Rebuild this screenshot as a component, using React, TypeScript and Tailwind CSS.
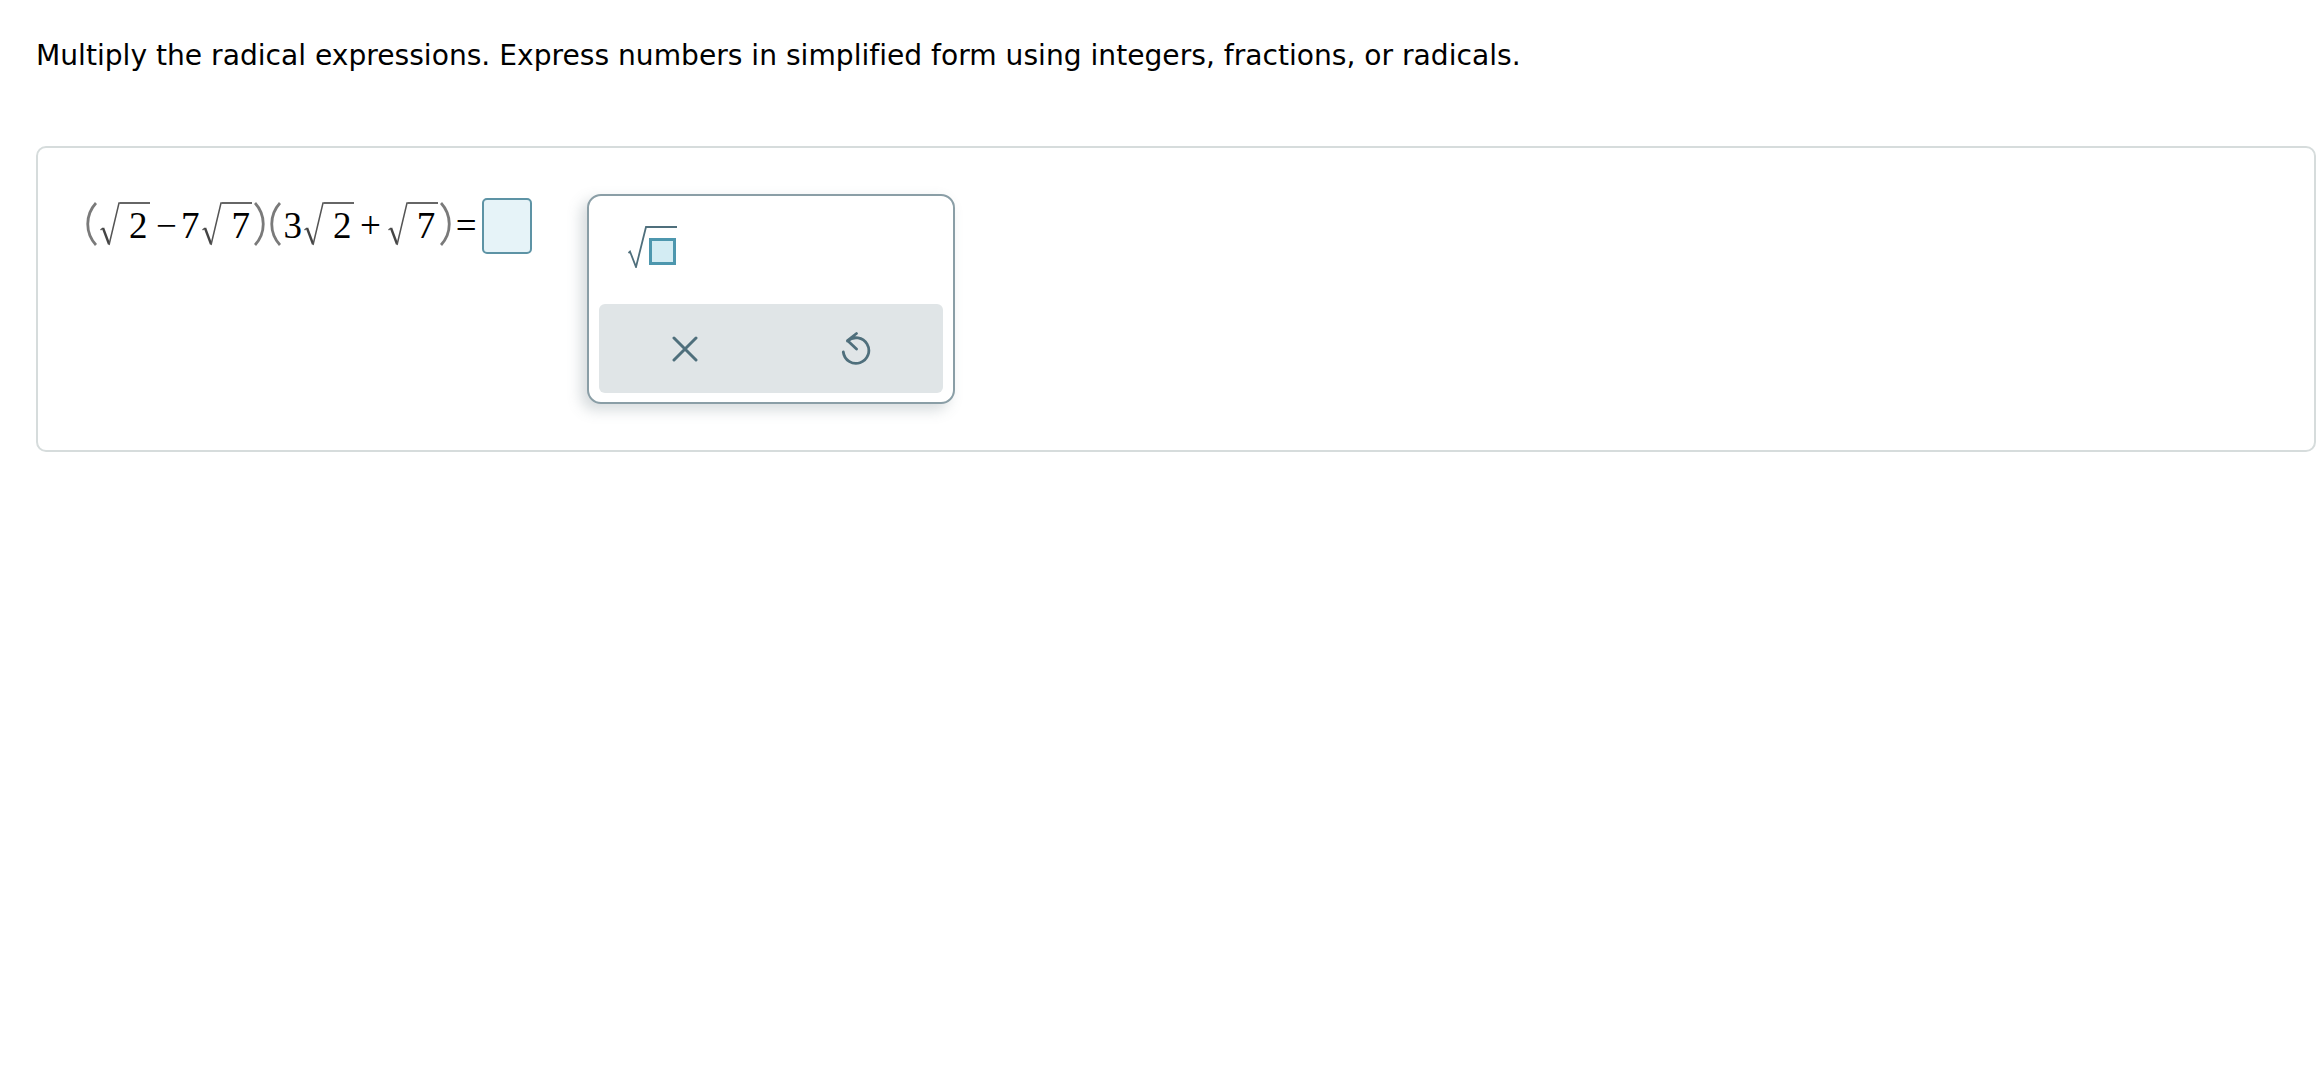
function Radical({ digit, className }: { digit: string; className?: string }) {
  return (
    <span className={`flex items-start h-[44px] ${className ?? ''}`}>
      <svg width="20" height="44" viewBox="0 0 20 44" className="shrink-0">
        <path d="M0.5 28 L3 26" fill="none" stroke="#555" strokeWidth="1.4" />
        <path d="M3 26 L9 42" fill="none" stroke="#444" strokeWidth="2.4" />
        <path d="M9 43 L19 1 L20 1" fill="none" stroke="#555" strokeWidth="1.5" />
      </svg>
      <span className="h-[44px] w-[30px] border-t-2 border-[#666] pl-[9px] text-[37px] leading-[44px] text-black">
        {digit}
      </span>
    </span>
  );
}

function Paren({ right, className }: { right?: boolean; className?: string }) {
  return (
    <svg width="11" height="44" viewBox="0 0 11 44" className={`shrink-0 ${className ?? ''}`}>
      <path
        d={right ? 'M1 1 C12 13 12 31 1 43' : 'M10 1 C-1 13 -1 31 10 43'}
        fill="none"
        stroke="#7a7a7a"
        strokeWidth="2.8"
      />
    </svg>
  );
}

function SqrtIcon() {
  return (
    <svg width="50" height="42" viewBox="0 0 50 42">
      <path d="M0.5 27 L2 25.5 L8 41 L18 1 L49 1" fill="none" stroke="#4f6f7c" strokeWidth="1.8" />
      <rect x="22.5" y="13.5" width="24" height="24" fill="#d3ecf3" stroke="#4d97ae" strokeWidth="3" />
    </svg>
  );
}

export default function App() {
  return (
    <div className="min-h-[1084px] bg-white pt-[37px] pl-[36px] pr-[8px] font-['DejaVu_Sans',sans-serif]">
      <p className="text-[28.14px] leading-[38px] text-black [font-variant-ligatures:none]">
        Multiply the radical expressions. Express numbers in simplified form using integers, fractions, or radicals.
      </p>

      <div className="mt-[71px] flex h-[306px] items-start rounded-[10px] border-2 border-[#d6dcdc] pl-[48px] pt-[46px]">
        {/* expression */}
        <div className="mt-[4px] flex h-[56px] items-start font-['Liberation_Serif',serif] text-[37px] leading-[44px] text-black">
          <div className="mt-[4px] flex items-start">
            <Paren />
            <Radical digit="2" className="ml-[3px]" />
            <span className="mt-[2px] ml-[6px]">−</span>
            <span className="mt-[2px] ml-[4px]">7</span>
            <Radical digit="7" className="ml-[3px]" />
            <Paren right className="ml-[2px]" />
            <Paren className="ml-[5px]" />
            <span className="mt-[2px] ml-[2px]">3</span>
            <Radical digit="2" className="ml-[2px]" />
            <span className="mt-[2px] ml-[6px]">+</span>
            <Radical digit="7" className="ml-[7px]" />
            <Paren right className="ml-[2px]" />
            <span className="mt-[2px] ml-[5px]">=</span>
          </div>
          <div className="ml-[5px] h-[56px] w-[50px] rounded-[5px] border-2 border-[#5d93a5] bg-[#e6f3f8]" />
        </div>

        {/* palette */}
        <div className="ml-[55px] flex h-[210px] w-[368px] flex-col rounded-[14px] border-2 border-[#8a9ea6] bg-white px-[10px] pb-[9px] shadow-[-6px_6px_14px_rgba(90,110,120,0.25)]">
          <div className="flex flex-1 items-start pl-[29px] pt-[30px]">
            <SqrtIcon />
          </div>
          <div className="flex h-[89px] items-center rounded-[6px] bg-[#e0e5e7]">
            <div className="flex w-1/2 justify-center">
              <svg width="26" height="26" viewBox="0 0 26 26">
                <path d="M2 2 L24 24 M24 2 L2 24" fill="none" stroke="#4f6f7c" strokeWidth="3" strokeLinecap="round" />
              </svg>
            </div>
            <div className="flex w-1/2 justify-center pr-[1px]">
              <svg width="30" height="34" viewBox="0 0 30 34">
                <path
                  d="M6.5 9 A12.8 12.8 0 1 1 2.3 20 M15.5 1.5 L6.5 8.5 L15.5 17"
                  fill="none"
                  stroke="#4f6f7c"
                  strokeWidth="2.8"
                  strokeLinecap="round"
                  strokeLinejoin="round"
                />
              </svg>
            </div>
          </div>
        </div>
      </div>
    </div>
  );
}
